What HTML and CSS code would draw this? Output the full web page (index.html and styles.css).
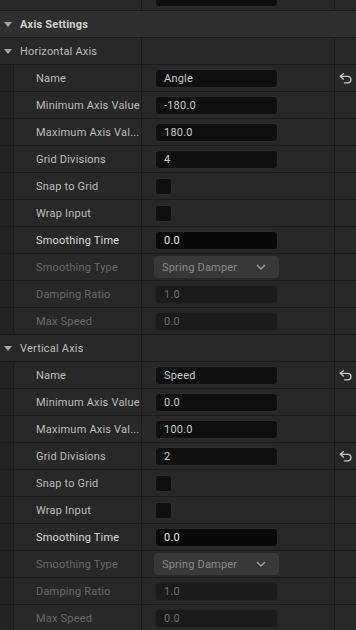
FILE: index.html
```html
<!DOCTYPE html>
<html lang="en">
<head>
  <meta charset="UTF-8" />
  <meta name="viewport" content="width=device-width, initial-scale=1.0" />
  <title>Axis Settings</title>
  <link rel="stylesheet" href="styles.css">
</head>
<body>
  <div class="panel">
    <div class="row row-cut">
      <div class="name"></div>
      <div class="value"><div class="field"></div></div>
      <div class="reset"></div>
    </div>

    <div class="row header">
      <span class="arrow"></span><span class="title">Axis Settings</span>
    </div>

    <!-- Horizontal -->
    <div class="row group">
      <div class="name"><span class="arrow"></span><span>Horizontal Axis</span></div>
      <div class="value"></div>
      <div class="reset"></div>
    </div>
    <div class="row child">
      <div class="name"><span class="indent"></span><span class="label">Name</span></div>
      <div class="value"><div class="field">Angle</div></div>
      <div class="reset"><svg viewBox="0 0 12 10" width="13" height="11"><path d="M1.2 3H8a3 3 0 0 1 0 6H5M1.2 3L4 0.6M1.2 3L4 5.4" /></svg></div>
    </div>
    <div class="row child">
      <div class="name"><span class="indent"></span><span class="label">Minimum Axis Value</span></div>
      <div class="value"><div class="field">-180.0</div></div>
      <div class="reset"></div>
    </div>
    <div class="row child">
      <div class="name"><span class="indent"></span><span class="label">Maximum Axis Val...</span></div>
      <div class="value"><div class="field">180.0</div></div>
      <div class="reset"></div>
    </div>
    <div class="row child">
      <div class="name"><span class="indent"></span><span class="label">Grid Divisions</span></div>
      <div class="value"><div class="field">4</div></div>
      <div class="reset"></div>
    </div>
    <div class="row child">
      <div class="name"><span class="indent"></span><span class="label">Snap to Grid</span></div>
      <div class="value"><div class="check"></div></div>
      <div class="reset"></div>
    </div>
    <div class="row child">
      <div class="name"><span class="indent"></span><span class="label">Wrap Input</span></div>
      <div class="value"><div class="check"></div></div>
      <div class="reset"></div>
    </div>
    <div class="row child">
      <div class="name"><span class="indent"></span><span class="label bright">Smoothing Time</span></div>
      <div class="value"><div class="field active">0.0</div></div>
      <div class="reset"></div>
    </div>
    <div class="row child">
      <div class="name"><span class="indent"></span><span class="label off">Smoothing Type</span></div>
      <div class="value"><div class="combo"><span>Spring Damper</span><svg viewBox="0 0 10 6" width="10" height="6"><path d="M1 1l4 4 4-4" /></svg></div></div>
      <div class="reset"></div>
    </div>
    <div class="row child">
      <div class="name"><span class="indent"></span><span class="label off">Damping Ratio</span></div>
      <div class="value"><div class="field disabled">1.0</div></div>
      <div class="reset"></div>
    </div>
    <div class="row child">
      <div class="name"><span class="indent"></span><span class="label off">Max Speed</span></div>
      <div class="value"><div class="field disabled">0.0</div></div>
      <div class="reset"></div>
    </div>

    <!-- Vertical -->
    <div class="row group">
      <div class="name"><span class="arrow"></span><span>Vertical Axis</span></div>
      <div class="value"></div>
      <div class="reset"></div>
    </div>
    <div class="row child">
      <div class="name"><span class="indent"></span><span class="label">Name</span></div>
      <div class="value"><div class="field">Speed</div></div>
      <div class="reset"><svg viewBox="0 0 12 10" width="13" height="11"><path d="M1.2 3H8a3 3 0 0 1 0 6H5M1.2 3L4 0.6M1.2 3L4 5.4" /></svg></div>
    </div>
    <div class="row child">
      <div class="name"><span class="indent"></span><span class="label">Minimum Axis Value</span></div>
      <div class="value"><div class="field">0.0</div></div>
      <div class="reset"></div>
    </div>
    <div class="row child">
      <div class="name"><span class="indent"></span><span class="label">Maximum Axis Val...</span></div>
      <div class="value"><div class="field">100.0</div></div>
      <div class="reset"></div>
    </div>
    <div class="row child">
      <div class="name"><span class="indent"></span><span class="label">Grid Divisions</span></div>
      <div class="value"><div class="field">2</div></div>
      <div class="reset"><svg viewBox="0 0 12 10" width="13" height="11"><path d="M1.2 3H8a3 3 0 0 1 0 6H5M1.2 3L4 0.6M1.2 3L4 5.4" /></svg></div>
    </div>
    <div class="row child">
      <div class="name"><span class="indent"></span><span class="label">Snap to Grid</span></div>
      <div class="value"><div class="check"></div></div>
      <div class="reset"></div>
    </div>
    <div class="row child">
      <div class="name"><span class="indent"></span><span class="label">Wrap Input</span></div>
      <div class="value"><div class="check"></div></div>
      <div class="reset"></div>
    </div>
    <div class="row child">
      <div class="name"><span class="indent"></span><span class="label bright">Smoothing Time</span></div>
      <div class="value"><div class="field active">0.0</div></div>
      <div class="reset"></div>
    </div>
    <div class="row child">
      <div class="name"><span class="indent"></span><span class="label off">Smoothing Type</span></div>
      <div class="value"><div class="combo"><span>Spring Damper</span><svg viewBox="0 0 10 6" width="10" height="6"><path d="M1 1l4 4 4-4" /></svg></div></div>
      <div class="reset"></div>
    </div>
    <div class="row child">
      <div class="name"><span class="indent"></span><span class="label off">Damping Ratio</span></div>
      <div class="value"><div class="field disabled">1.0</div></div>
      <div class="reset"></div>
    </div>
    <div class="row child">
      <div class="name"><span class="indent"></span><span class="label off">Max Speed</span></div>
      <div class="value"><div class="field disabled">0.0</div></div>
      <div class="reset"></div>
    </div>
  </div>
</body>
</html>
```

FILE: styles.css
```css
* {
  margin: 0;
  padding: 0;
  box-sizing: border-box;
}
body {
  font-family: Roboto, "Liberation Sans", sans-serif;
  font-size: 11px;
  letter-spacing: 0.2px;
  background-color: #262626;
  color: #bdbdbd;
  width: 356px;
  height: 630px;
  overflow: hidden;
}
.panel {
  display: flex;
  flex-direction: column;
}
.row {
  display: flex;
  height: 27px;
  border-bottom: 1px solid #1b1b1b;
  background: #282828;
}
.name {
  width: 142px;
  display: flex;
  align-items: center;
  border-right: 1px solid #1b1b1b;
}
.value {
  width: 193px;
  display: flex;
  align-items: center;
  padding-left: 13px;
  border-right: 1px solid #1b1b1b;
}
.reset {
  flex: 1;
  display: flex;
  align-items: center;
  justify-content: center;
}
.reset svg {
  fill: none;
  stroke: #c4c4c4;
  stroke-width: 1.3;
  stroke-linecap: round;
  stroke-linejoin: round;
}

.row-cut {
  height: 11px;
  overflow: hidden;
}
.row-cut .value {
  align-items: flex-end;
  padding-bottom: 3px;
}

.header {
  background: #2f2f2f;
  align-items: center;
  padding-left: 4px;
}
.header .title {
  font-weight: bold;
  color: #d0d0d0;
}
.arrow {
  width: 0;
  height: 0;
  border-left: 4px solid transparent;
  border-right: 4px solid transparent;
  border-top: 5px solid #a8a8a8;
  margin-right: 8px;
  margin-top: 1px;
}
.group .name {
  padding-left: 4px;
}

.child .name {
  align-items: stretch;
}
.indent {
  width: 14px;
  background: #242424;
  border-right: 1px solid #1b1b1b;
}
.label {
  display: flex;
  align-items: center;
  padding-left: 22px;
  white-space: nowrap;
  overflow: hidden;
}
.label.bright {
  color: #dadada;
}
.label.off {
  color: #6a6a6a;
}

.field {
  width: 123px;
  height: 19px;
  background: #0f0f0f;
  border: 1px solid #2c2c2c;
  border-radius: 4px;
  padding-left: 8px;
  display: flex;
  align-items: center;
  color: #c8c8c8;
}
.field.active {
  background: #090909;
  color: #e8e8e8;
}
.field.disabled {
  background: #1b1b1b;
  border-color: #252525;
  color: #6e6e6e;
}
.check {
  width: 17px;
  height: 17px;
  background: #0f0f0f;
  border: 1px solid #2c2c2c;
  border-radius: 3px;
}
.combo {
  width: 125px;
  height: 22px;
  margin-left: -1px;
  background: #383838;
  border-radius: 4px;
  display: flex;
  align-items: center;
  justify-content: space-between;
  padding: 0 13px 0 8px;
  color: #8a8a8a;
}
.combo svg {
  fill: none;
  stroke: #a0a0a0;
  stroke-width: 1.4;
}
```
